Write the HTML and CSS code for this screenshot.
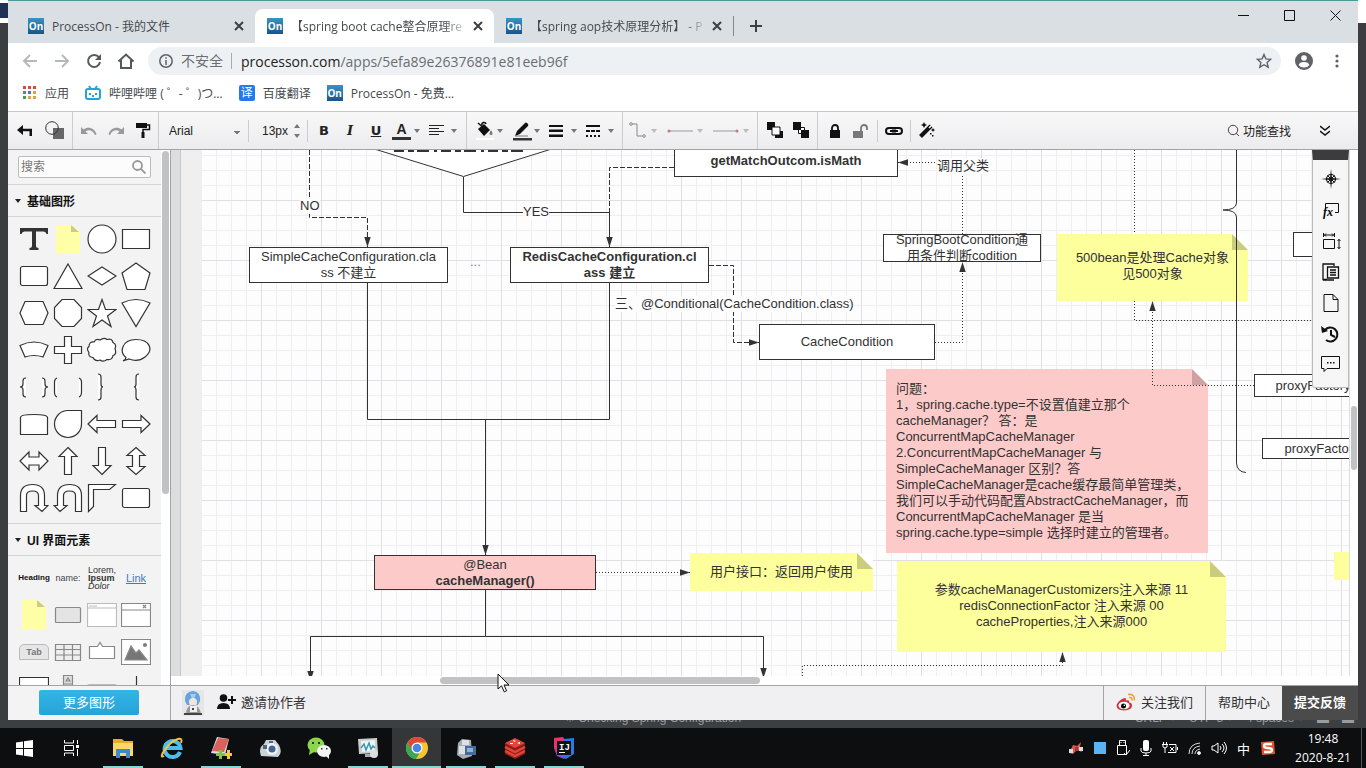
FILE: index.html
```html
<!DOCTYPE html>
<html lang="zh-CN">
<head>
  <meta charset="UTF-8">
  <meta name="viewport" content="width=device-width, initial-scale=1.0">
  <title>spring boot cache整合原理 - ProcessOn</title>
  <link rel="stylesheet" href="styles.css">
</head>
<body>
  <div class="screen">
    <div class="ide-edge ide-left"></div>

    <div class="browser">
      <!-- Tabs -->
      <div class="tab-strip">
        <div class="tab">
          <span class="favicon">On</span>
          <span class="tab-title">ProcessOn - 我的文件</span>
          <button class="tab-close" aria-label="关闭"><svg width="10" height="10"><path d="M1 1l8 8M9 1l-8 8"/></svg></button>
        </div>
        <div class="tab active">
          <span class="favicon">On</span>
          <span class="tab-title">【spring boot cache整合原理re</span>
          <button class="tab-close" aria-label="关闭"><svg width="10" height="10"><path d="M1 1l8 8M9 1l-8 8"/></svg></button>
        </div>
        <div class="tab last">
          <span class="favicon">On</span>
          <span class="tab-title">【spring aop技术原理分析】 - P</span>
          <button class="tab-close" aria-label="关闭"><svg width="10" height="10"><path d="M1 1l8 8M9 1l-8 8"/></svg></button>
        </div>
        <button class="new-tab" aria-label="新标签页"><svg width="12" height="12"><path d="M6 0v12M0 6h12"/></svg></button>
        <div class="window-buttons">
          <button aria-label="最小化"><svg width="11" height="11"><path d="M0 5.500h11"/></svg></button>
          <button aria-label="最大化"><svg width="11" height="11"><path d="M.5.5h10v10H.5z"/></svg></button>
          <button aria-label="关闭"><svg width="11" height="11"><path d="M.5.5l10 10M.5 10.500l10-10"/></svg></button>
        </div>
      </div>

      <!-- Address bar -->
      <div class="nav-bar">
        <button class="nav-btn off" aria-label="后退"><svg width="16" height="16"><path d="M15 8H2M8 2L2 8l6 6"/></svg></button>
        <button class="nav-btn off" aria-label="前进"><svg width="16" height="16"><path d="M1 8h13M8 2l6 6-6 6"/></svg></button>
        <button class="nav-btn" aria-label="刷新"><svg width="16" height="16"><path d="M13 4.500A6 6 0 1 0 14 9"/><path class="fill" d="M15 1v6H9z"/></svg></button>
        <button class="nav-btn" aria-label="主页"><svg width="18" height="16"><path d="M1.500 8.500L9 1.500l7.500 7M4 7v8h10V7"/></svg></button>
        <div class="address">
          <svg class="info" width="14" height="14"><circle cx="7" cy="7" r="6.200"/><path d="M7 6v5M7 3.200v1.600"/></svg>
          <span class="unsafe">不安全</span>
          <span class="url"><b>processon.com</b>/apps/5efa89e26376891e81eeb96f</span>
          <svg class="star" width="16" height="16" viewBox="0 0 16 16"><path d="M8 1.500l1.900 4.400 4.800.4-3.600 3.200 1.100 4.700L8 11.700l-4.200 2.500 1.100-4.700L1.300 6.300l4.800-.4z"/></svg>
        </div>
        <button class="user" aria-label="用户"><svg width="18" height="18" viewBox="0 0 18 18"><circle cx="9" cy="9" r="9" fill="#5f6368"/><circle cx="9" cy="6" r="2.800" fill="#fff"/><path d="M3.600 13c1-2.400 3.200-3 5.400-3s4.400.6 5.400 3A6.600 6.600 0 0 1 9 15.500 6.600 6.600 0 0 1 3.600 13z" fill="#fff"/></svg></button>
        <button class="menu" aria-label="菜单"><svg width="4" height="14" fill="#5f6368"><circle cx="2" cy="2" r="1.600"/><circle cx="2" cy="7" r="1.600"/><circle cx="2" cy="12" r="1.600"/></svg></button>
      </div>

      <!-- Bookmarks -->
      <nav class="bookmarks">
        <a href="#"><svg width="14" height="14"><path fill="#d44a3c" d="M0 0h3v3H0zM5 0h3v3H5zM10 0h3v3h-3z"/><path fill="#4c9a57" d="M0 5h3v3H0zM0 10h3v3H0z"/><path fill="#3f79d0" d="M5 5h3v3H5z"/><path fill="#e0a53a" d="M10 5h3v3h-3zM5 10h3v3H5zM10 10h3v3h-3z"/></svg>应用</a>
        <a href="#"><svg width="16" height="16" fill="none" stroke="#22a5d6" stroke-width="2"><rect x="1" y="4" width="14" height="10" rx="2"/><path d="M4 1l2 3M12 1l-2 3M5 8v2M11 8v2M7 11h2"/></svg>哔哩哔哩 ( ゜- ゜)つ…</a>
        <a href="#"><span class="yi">译</span>百度翻译</a>
        <a href="#"><span class="favicon">On</span>ProcessOn - 免费…</a>
      </nav>

      <!-- Editor toolbar -->
      <div class="toolbar">
        <div class="group g-file">
          <button class="tool" aria-label="返回"><svg width="16" height="14"><path class="blk" d="M0 6l6-5v3.700h9V12h-2.500V7.300H6V11z"/></svg></button>
          <button class="tool" aria-label="图形"><svg width="20" height="19"><path fill="#666" d="M8 7h11v11H8z"/><circle cx="7" cy="7" r="6.300" fill="none" stroke="#333"/></svg></button>
        </div>
        <div class="group g-undo">
          <button class="tool" aria-label="撤销"><svg width="16" height="12"><path fill="#999" d="M0 2v7h7L4.500 6.500C8 4 12 5.500 14 10l1.500-.5C14 3 7 1 2.500 4.500z"/></svg></button>
          <button class="tool" aria-label="恢复"><svg width="16" height="12"><path fill="#999" d="M16 2v7H9l2.500-2.500C8 4 4 5.500 2 10L.5 9.500C2 3 9 1 13.500 4.500z"/></svg></button>
          <button class="tool" aria-label="格式刷"><svg width="16" height="17"><path class="blk" d="M1 1h11v5H1z"/><path d="M12 3h2.500v4.500H8V11" fill="none" stroke="#111" stroke-width="1.500"/><path class="blk" d="M6.500 10h3v6h-3z"/></svg></button>
        </div>
        <div class="group g-text">
          <select class="font-name" aria-label="字体"><option>Arial</option></select>
          <span class="font-size"><input type="text" value="13px" aria-label="字号"><svg width="6" height="14" fill="#777"><path d="M0 4l3-4 3 4zM0 10l3 4 3-4z"/></svg></span>
          <button class="tool letter bold">B</button>
          <button class="tool letter italic">I</button>
          <button class="tool letter under">U</button>
          <button class="tool drop" aria-label="字体颜色"><span class="font-color">A</span><i class="arrow"></i></button>
          <button class="tool drop" aria-label="对齐"><svg width="16" height="13"><path d="M0 1.500h15M0 4.500h10M0 7.500h15M0 10.500h10" stroke="#222"/></svg><i class="arrow"></i></button>
        </div>
        <div class="group g-style">
          <button class="tool drop" aria-label="填充"><svg width="20" height="20"><path class="blk" d="M3 8l6-5 6 6-6 6z"/><path d="M3 2l7 6M7 4a2 2 0 0 1 4-1" fill="none" stroke="#111" stroke-width="1.500"/><path d="M16 9q3 5 0 5t0-5" fill="#777"/><path fill="#fff" d="M1 17h18v2H1z"/></svg><i class="arrow"></i></button>
          <button class="tool drop" aria-label="线条颜色"><svg width="20" height="20"><path class="blk" d="M3 15l2-5 8-8q1-1 2.500.5T16 5l-8 8z"/><path d="M3 15h13" stroke="#777"/><path fill="#333" d="M1 17h19v2.500H1z"/></svg><i class="arrow"></i></button>
          <button class="tool drop" aria-label="线宽"><svg width="14" height="12"><path class="blk" d="M0 0h14v2H0zM0 4.500h14v2.500H0zM0 9.500h14V12H0z"/></svg><i class="arrow"></i></button>
          <button class="tool drop" aria-label="线型"><svg width="14" height="12"><path class="blk" d="M0 0h14v2H0zM0 5h4v2H0zM5 5h4v2H5zM10 5h4v2h-4zM0 10h2v2H0zM4 10h2v2H4zM8 10h2v2H8zM12 10h2v2h-2z"/></svg><i class="arrow"></i></button>
        </div>
        <div class="group g-line">
          <button class="tool drop" aria-label="连线类型"><svg width="18" height="17" fill="none" stroke="#888"><path d="M3 2h5v12h5"/><circle cx="2" cy="2" r="1.300"/><circle cx="15" cy="14" r="1.300"/></svg><i class="arrow pale"></i></button>
          <button class="tool drop" aria-label="起点"><svg width="26" height="4"><path d="M2 2h24" stroke="#999"/><circle cx="2" cy="2" r="1.500" fill="#c77"/></svg><i class="arrow pale"></i></button>
          <button class="tool drop" aria-label="终点"><svg width="26" height="4"><path d="M0 2h24" stroke="#999"/><circle cx="24" cy="2" r="1.500" fill="#c77"/></svg><i class="arrow pale"></i></button>
        </div>
        <div class="group g-pair">
          <button class="tool" aria-label="置于顶层"><svg width="17" height="17"><path class="blk" d="M0 0h8v8H0zM8 9h8v7H8z"/><path fill="#fff" stroke="#111" d="M5 5h8v8H5z"/></svg></button>
          <button class="tool" aria-label="置于底层"><svg width="17" height="17"><path fill="#fff" stroke="#111" d="M5.500 5.500h6v6h-6z"/><path class="blk" d="M0 0h8v8H0zM8 8h8v8H8z"/></svg></button>
        </div>
        <div class="group g-pair short">
          <button class="tool" aria-label="锁定"><svg width="12" height="15"><path class="blk" d="M1 6h10v8H1z"/><path d="M3 7V4a3 3 0 0 1 6 0v3" fill="none" stroke="#111" stroke-width="1.800"/></svg></button>
          <button class="tool" aria-label="解锁"><svg width="16" height="15"><path fill="#777" d="M0 7h10v7H0z"/><path d="M8 8V4a3 3 0 0 1 6 0v2" fill="none" stroke="#777" stroke-width="1.800"/></svg></button>
        </div>
        <div class="group g-one short">
          <button class="tool" aria-label="链接"><svg width="18" height="8" fill="none" stroke="#111" stroke-width="2"><path d="M8 2.500V1H4a3 3 0 0 0 0 6h4V5.500M10 2.500V1h4a3 3 0 0 1 0 6h-4V5.500M5 4h8"/></svg></button>
        </div>
        <div class="group g-one none">
          <button class="tool" aria-label="美化"><svg width="17" height="17"><path d="M1.500 14.500L12 4" stroke="#111" stroke-width="4"/><path d="M10 6l2-2" stroke="#fff" stroke-width="1.500"/><path class="blk" d="M5 0l1 2 2 1-2 1-1 2-1-2-2-1 2-1zM14 6l.7 1.300 1.300.7-1.300.7L14 10l-.7-1.300L12 8l1.300-.7zM11 11h1.500v1.500H11zM13 13h1.500v1.500H13z"/></svg></button>
        </div>
        <button class="find"><svg width="13" height="13" fill="none" stroke="#444"><circle cx="6" cy="6" r="4.700"/><path d="M9 9l3 3"/></svg>功能查找</button>
        <button class="fold" aria-label="收起"><svg width="10" height="11" fill="none" stroke="#111" stroke-width="1.500"><path d="M0 1l5 4 5-4M0 6l5 4 5-4"/></svg></button>
      </div>

      <div class="editor">
        <!-- Shape library -->
        <aside class="panel">
          <div class="panel-scroll">
            <div class="panel-list">
              <label class="search"><input type="text" placeholder="搜索" aria-label="搜索"><svg width="14" height="14" fill="none" stroke="#999" stroke-width="1.800"><circle cx="5.500" cy="5.500" r="4.500"/><path d="M9 9l4.500 4.500"/></svg></label>
              <h3>基础图形</h3>
              <div class="shapes">
                <svg viewBox="0 0 30 30"><path fill="#333" stroke="none" d="M1 4h28v6h-1.500q-.5-2.500-3-2.500H17V22q0 2 2.500 2v2h-9v-2q2.500 0 2.500-2V7.500H5.500q-2.500 0-3 2.500H1z"/></svg>
                <svg viewBox="0 0 30 30"><path fill="#ffffa8" stroke="none" d="M3 1h16l8 7v22H3z"/><path fill="#cccc86" stroke="none" d="M18 1l8 7h-8z"/></svg>
                <svg viewBox="0 0 30 30"><circle cx="15" cy="15" r="14"/></svg>
                <svg viewBox="0 0 30 30"><path d="M1.500 5.500h27v19h-27z"/></svg>
                <svg viewBox="0 0 30 30"><rect x="1.500" y="5.500" width="27" height="19" rx="2"/></svg>
                <svg viewBox="0 0 30 30"><path d="M15 3l14 24.500H1z"/></svg>
                <svg viewBox="0 0 30 30"><path d="M15 6l14 9-14 9-14-9z"/></svg>
                <svg viewBox="0 0 30 30"><path d="M15 2l14 10-5 16.500H6L1 12z"/></svg>
                <svg viewBox="0 0 30 30"><path d="M6 3.500h18l5 11.500-5 11.500H6L1 15z"/></svg>
                <svg viewBox="0 0 30 30"><path d="M9 1.500h12l7.500 8v11l-7.500 8H9l-7.500-8v-11z"/></svg>
                <svg viewBox="0 0 30 30"><path d="M15 1.500l3.500 10H29l-8.500 6.500 3.500 10.500-9-6.500-9 6.500L9.500 18 1 11.500h10.500z"/></svg>
                <svg viewBox="0 0 30 30"><path d="M1 5q14-7 28 0L15 28.500z"/></svg>
                <svg viewBox="0 0 30 30"><path d="M1 10.500q14-7 28 0L24 22q-9-3-18 0z"/></svg>
                <svg viewBox="0 0 30 30"><path d="M11.500 1.500h7v10h10v7h-10v10h-7v-10h-10v-7h10z"/></svg>
                <svg viewBox="0 0 30 30"><path d="M7 7q2-4 6-2 4-3 7-.5 5-1.500 6 3 4 2 2 6 2 6-2 7-1 5-6 4-4 3-7 .5-5 2-7-2.500-5-.5-4-5-3-4 0-6 0-5 5-4.500z"/></svg>
                <svg viewBox="0 0 30 30"><path d="M5 22.500C-2 17 1 4.500 15 4.500S33 15 24 22c-5 4-11 4-16 2l-6 2c2-1 3-2 3-3.500z"/></svg>
                <svg viewBox="0 0 30 30"><path d="M7 6q-3 0-3 3v3q0 3-3 3 3 0 3 3v4q0 3 3 3M23 6q3 0 3 3v3q0 3 3 3-3 0-3 3v4q0 3-3 3"/></svg>
                <svg viewBox="0 0 30 30"><path d="M4 6q-2.500 1-2.500 4v10q0 4 2.500 5M26 6q2.500 1 2.500 4v10q0 4-2.500 5"/></svg>
                <svg viewBox="0 0 30 30"><path d="M11 2q3 0 3 3v7q0 3 2 3-2 0-2 3v7q0 3-3 3"/></svg>
                <svg viewBox="0 0 30 30"><path d="M18 2q-3 0-3 3v7q0 3-2 3 2 0 2 3v7q0 3 3 3"/></svg>
                <svg viewBox="0 0 30 30"><path d="M1.500 25.500v-17q0-3 13.500-3t13.500 3v17z"/></svg>
                <svg viewBox="0 0 30 30"><path d="M28.500 1.500v13.500A13.500 13.500 0 1 1 15 1.500z"/></svg>
                <svg viewBox="0 0 30 30"><path d="M1 15l9-8.500v5h18.500v7H10v5z"/></svg>
                <svg viewBox="0 0 30 30"><path d="M29 15l-9-8.500v5H1.500v7H20v5z"/></svg>
                <svg viewBox="0 0 30 30"><path d="M1 15l9-9v5h10V6l9 9-9 9v-5H10v5z"/></svg>
                <svg viewBox="0 0 30 30"><path d="M15 1.500l9 9h-5.500v18h-7v-18H6z"/></svg>
                <svg viewBox="0 0 30 30"><path d="M15 28.500l9-9h-5.500v-18h-7v18H6z"/></svg>
                <svg viewBox="0 0 30 30"><path d="M15 1.500l9 8h-5.500v11H24l-9 8-9-8h5.500v-11H6z"/></svg>
                <svg viewBox="0 0 30 30"><path d="M1.500 28.500v-16q0-11 12-11t12 11v10H29l-6 6-7-6h3.500v-10q0-4.500-6-4.500t-6 4.500v16z"/></svg>
                <svg viewBox="0 0 30 30"><path d="M28.500 28.500v-16q0-11-12-11t-12 11v10H1l6 6 7-6h-3.500v-10q0-4.500 6-4.500t6 4.500v16z"/></svg>
                <svg viewBox="0 0 30 30"><path d="M1.500 28.500v-27h27l-6 5h-16v17z"/></svg>
                <svg viewBox="0 0 30 30"><rect x="1.500" y="5.500" width="27" height="19" rx="2"/></svg>
              </div>
              <h3>UI 界面元素</h3>
              <div class="shapes ui">
                <span class="u-heading">Heading</span>
                <span class="u-name">name:</span>
                <span class="u-lorem">Lorem,<b>Ipsum</b><i>Dolor</i></span>
                <span class="u-link">Link</span>
                <svg viewBox="0 0 30 30"><path fill="#ffffa8" stroke="none" d="M3 0h16l8 7v22H3z"/><path fill="#cccc86" stroke="none" d="M18 0l8 7h-8z"/></svg>
                <svg viewBox="0 0 30 30" class="gray"><rect x="2.500" y="7.500" width="25" height="15" rx="1" fill="#e4e4e4"/></svg>
                <svg viewBox="0 0 30 30" class="light"><path d="M.5 3.500h29v23H.5zM.5 8h29M2 6h8"/></svg>
                <svg viewBox="0 0 30 30" class="gray"><path d="M.5 3.500h29v23H.5zM.5 10h29M22 5l3 3M25 5l-3 3"/></svg>
                <span class="u-tab">Tab</span>
                <svg viewBox="0 0 30 30" class="gray"><path d="M2.500 7.500h25v16h-25zM2.500 12.500h25M2.500 18h25M11 7.500v16M19.500 7.500v16" fill="#eee"/></svg>
                <svg viewBox="0 0 30 30" class="gray"><path d="M2.500 9.500h8l2.500-4 2.500 4h12v12h-25z"/></svg>
                <svg viewBox="0 0 30 30" class="gray"><path d="M.5 2.500h29v25H.5z"/><path d="M4 23L10 9l5 7 3-3 8 10z" fill="#777"/><circle cx="24" cy="8" r="1.500" fill="#777"/></svg>
                <svg viewBox="0 0 30 30"><path d="M.5 3.500h29v23H.5z"/></svg>
                <svg viewBox="0 0 30 30" class="gray"><path d="M10.500 1.500h9v27h-9zM10.500 10h9M13 7l2-3 2 3z" fill="#ddd"/></svg>
                <svg viewBox="0 0 30 30" class="light"><rect x=".5" y="10.500" width="29" height="9" rx="2"/></svg>
                <svg viewBox="0 0 30 30"><path d="M15.500 2v26"/></svg>
              </div>
            </div>
            <div class="panel-bar"><div class="thumb"></div></div>
          </div>
          <div class="more"><button>更多图形</button></div>
        </aside>

        <main class="work">
          <div class="canvas">
            <div class="gutter"></div>
            <div class="sheet">
              <div class="note n-bean">500bean是处理Cache对象<br>见500对象</div>
              <div class="note pink n-question">问题：<br>1，spring.cache.type=不设置值建立那个<br>cacheManager？ 答：是<br>ConcurrentMapCacheManager<br>2.ConcurrentMapCacheManager 与<br>SimpleCacheManager 区别？答<br>SimpleCacheManager是cache缓存最简单管理类，<br>我们可以手动代码配置AbstractCacheManager，而<br>ConcurrentMapCacheManager 是当<br>spring.cache.type=simple 选择时建立的管理者。</div>
              <div class="note n-user">用户接口：返回用户使用</div>
              <div class="note n-params">参数cacheManagerCustomizers注入来源 11<br>redisConnectionFactor 注入来源 00<br>cacheProperties,注入来源000</div>
              <div class="note flat n-edge"></div>

              <!-- Connectors, drawn in screen units -->
              <svg class="wires" width="1147" height="526" viewBox="202 150 1147 526">
                <defs>
                  <marker id="tip" markerUnits="userSpaceOnUse" markerWidth="10" markerHeight="8" refX="10" refY="4" orient="auto"><path d="M0 .8L10 4 0 7.200z" fill="#323232"/></marker>
                </defs>
                <path class="solid white" d="M376 149.500L463.500 176.500 550 149.500"/>
                <path class="clip-text" d="M394 151H526"/>
                <path class="dash" marker-end="url(#tip)" d="M309.500 150V217.500H367.500V247"/>
                <path class="solid" marker-end="url(#tip)" d="M463.500 177V212.500H609.500V247"/>
                <path class="dash" d="M674 167.500H609.500V240"/>
                <path class="dash" marker-end="url(#tip)" d="M709 265.500H733.500V342.500H759"/>
                <path class="dot" marker-end="url(#tip)" d="M935 342.500H962.500V262"/>
                <path class="dot" marker-end="url(#tip)" d="M962.500 234V162.500H898"/>
                <path class="dot" d="M1134.500 150V234M1134.500 301V320.500H1349"/>
                <path class="dot" marker-end="url(#tip)" d="M1254 385.500H1152.500V301"/>
                <path class="solid" d="M367.500 283V419.500H609.500V283"/>
                <path class="solid" marker-end="url(#tip)" d="M485.500 419V555"/>
                <path class="solid" marker-end="url(#tip)" d="M485.500 590V636.500H310.500V681"/>
                <path class="solid" marker-end="url(#tip)" d="M485.500 636.500H763.500V678"/>
                <path class="dot" marker-end="url(#tip)" d="M596 572.500H690"/>
                <path class="dot" marker-end="url(#tip)" d="M802.500 676V665.500H1062.500V652"/>
                <path class="solid" d="M1236.500 150V203Q1236 210 1223 210 1236 210 1236.500 217V463Q1237 472 1246 472.500"/>
              </svg>

              <div class="box n-simple">SimpleCacheConfiguration.cla<br>ss 不建立</div>
              <div class="box strong n-redis">RedisCacheConfiguration.cl<br>ass 建立</div>
              <div class="box strong n-match">getMatchOutcom.isMath</div>
              <div class="box n-boot">SpringBootCondition通<br>用条件判断codition</div>
              <div class="box n-cond">CacheCondition</div>
              <div class="box red n-manager">@Bean<br><b>cacheManager()</b></div>
              <div class="box n-proxy">proxyFactory</div>
              <div class="box n-proxy2">proxyFactory</div>
              <div class="box n-blank"></div>
              <span class="tag t-no">NO</span>
              <span class="tag t-yes">YES</span>
              <span class="tag t-parent">调用父类</span>
              <span class="tag t-cond">三、@Conditional(CacheCondition.class)</span>
              <span class="tag bare t-dots">...</span>
            </div>
            <div class="v-bar"><div class="thumb"></div></div>

            <!-- Floating dock -->
            <div class="dock">
              <button aria-label="导航"><svg width="20" height="20"><circle cx="10" cy="10" r="4.500" fill="none" stroke="#111" stroke-width="1.200"/><path class="blk" d="M10 0l1 9 9 1-9 1-1 9-1-9-9-1 9-1z"/><path d="M6.500 6.500l7 7M13.500 6.500l-7 7" stroke="#111"/></svg></button>
              <button aria-label="公式"><svg width="18" height="18"><path d="M3.500 8V2.500h13v9H13" fill="none" stroke="#111"/><text x="1" y="15" class="fx">fx</text></svg></button>
              <button aria-label="尺寸"><svg width="20" height="18" fill="none" stroke="#111"><path d="M2.500 7.500h11v9h-11zM2.500 1v4M13.500 1v4M3 3h10M5 1.500L3.500 3 5 4.500M11 1.500L12.500 3 11 4.500M18 7v10M16.500 9L18 7.500 19.500 9M16.500 15l1.500 1.500 1.500-1.500"/></svg></button>
              <button aria-label="图层"><svg width="18" height="18" fill="none" stroke="#111" stroke-width="1.300"><path d="M5 16.500H1V1h11v2M12 17H1"/><path d="M5.500 4h11v11h-11zM8 7h6M8 9.500h6M8 12h6"/></svg></button>
              <button aria-label="页面"><svg width="16" height="18" fill="none" stroke="#111"><path d="M1 .5h9l5 5v12H1zM10 .5v5h5"/></svg></button>
              <button aria-label="历史"><svg width="20" height="18" fill="none" stroke="#111" stroke-width="2"><path d="M4 5a7 7 0 1 1 1 10"/><path d="M10 5v5l4 2"/><path class="blk" stroke="none" d="M0 1l1 7 6-2z"/></svg></button>
              <button aria-label="评论"><svg width="20" height="17"><path d="M.5.5h18v12H6l-3 3v-3H.5z" fill="none" stroke="#111"/><path class="blk" d="M6 6h1.500v1.500H6zM9 6h1.500v1.500H9zM12 6h1.500v1.500H12z"/></svg></button>
            </div>
          </div>
          <div class="h-bar"><div class="thumb"></div>
            <svg class="cursor" width="13" height="20"><path d="M1 1v15l3.500-3.200 2.700 6 2.400-1-2.600-5.800h5z" fill="#fff" stroke="#111"/></svg>
          </div>
          <footer class="status">
            <svg class="avatar" width="22" height="26"><path fill="#e6e6e6" d="M0 0h22v26H0z"/><path fill="#68a3dc" d="M3 11q-1-9 8-10 8 1 7 10l-2 4H5z"/><path fill="#a8ccea" d="M8 4l3 7 3-7z"/><circle cx="11" cy="12" r="4" fill="#f1e5df"/><path fill="#999" d="M4 25q0-10 7-10t8 10z"/><path fill="#eee" d="M8 16h7v6H8z"/><path fill="#444" d="M2 23h18v2H2zM10 18h2v2h-2z"/></svg>
            <button class="invite"><svg width="19" height="16" class="blk"><circle cx="6.500" cy="4" r="3.800"/><path d="M0 15q0-6 6.500-6T13 15zM14 2h2v3h3v2h-3v3h-2V7h-3V5h3z"/></svg>邀请协作者</button>
            <button class="link weibo"><svg width="20" height="18"><path fill="#d0323c" d="M9 5q-5 1-8 6-2 6 7 6.500 8-.5 8-5 0-3-3-3 1-3-3-2 0-3-1-2.500z"/><ellipse cx="8" cy="12.500" rx="5.500" ry="3.800" fill="#fff"/><circle cx="7.500" cy="13" r="2.500"/><circle cx="8.300" cy="12.300" r=".8" fill="#fff"/><path d="M12 1.500q7-1 6.500 6M13 4.500q3.500-.5 3 3" fill="none" stroke="#f0a030" stroke-width="1.600"/></svg>关注我们</button>
            <button class="link">帮助中心</button>
            <button class="link feedback">提交反馈</button>
          </footer>
        </main>
      </div>
    </div>

    <div class="ide-edge ide-right"></div>
  </div>

  <div class="ide-status">
    <span class="ide-task">✳ Checking Spring Configuration</span>
    <span>CRLF ÷</span><span>UTF-8 ÷</span><span>4 spaces ÷</span><span>▟</span><span>▟</span>
  </div>

  <!-- Windows taskbar -->
  <div class="taskbar">
    <button class="start" aria-label="开始"><svg width="17" height="17" fill="#fff"><path d="M0 2.500l7-1V8H0zM8 1.300L17 0v8H8zM0 9h7v6.500l-7-1zM8 9h9v8l-9-1.300z"/></svg></button>
    <button class="start" aria-label="任务视图"><svg width="16" height="16" fill="none" stroke="#fff"><path d="M.5 0v3h9V0M.5 5.500h9v5h-9zM.5 16v-3h9v3M13.500 0v4M13.500 9v7"/><path d="M12 5h3v3h-3z" fill="#fff" stroke="none"/></svg></button>
    <button class="app run" aria-label="资源管理器"><svg width="24" height="24"><path fill="#e6ac2c" d="M2 3h9l2 2h9v4H2z"/><path fill="#fbd66b" d="M2 7h20v13H2z"/><path fill="#3b8ac9" d="M5 22v-9h14v9h-4v-5H9v5z"/></svg></button>
    <button class="app" aria-label="Internet Explorer"><svg width="24" height="24" fill="none"><path d="M20 16a8 8 0 1 1 .5-4H6" stroke="#4dbdf0" stroke-width="4"/><path d="M4 20C-3 24 8 6 18 3q5-1 3 4" stroke="#f3c63b" stroke-width="2"/></svg></button>
    <button class="app run" aria-label="Notepad++"><svg width="24" height="24"><path fill="#ddd" d="M8 1l12 2-4 16-14-2z"/><path fill="#d9625c" d="M9 2l11 1-5 13-12-1z"/><path fill="#82c341" d="M7 17h3v-3h3v3h3v3h-3v3h-3v-3H7z"/><path fill="#f2cb3d" d="M16 17h2v-3h3v3h2v3h-2v3h-3v-3h-2z"/></svg></button>
    <button class="app" aria-label="工具"><svg width="24" height="24"><path fill="#c9d2db" d="M3 20q-3-8 3-12l2-4h9l4 5q4 8-1 12z"/><circle cx="14" cy="13" r="6" fill="#eef3f7"/><circle cx="14" cy="13" r="3.500" fill="#43678e"/><path fill="#567" d="M5 9h4v4H5zM11 5h4v2h-4z"/></svg></button>
    <button class="app" aria-label="微信"><svg width="24" height="24"><ellipse cx="9" cy="9" rx="8.500" ry="7.500" fill="#8bd64b"/><path fill="#8bd64b" d="M3 13l-1 6 5-3z"/><ellipse cx="17" cy="15" rx="7" ry="6" fill="#f4f4f4"/><path fill="#f4f4f4" d="M18 19l4 4v-5z"/><path fill="#333" d="M5 6h2v2H5zM11 6h2v2h-2zM14 12h1.500v1.500H14zM19 12h1.500v1.500H19z"/></svg></button>
    <button class="app run" aria-label="监视器"><svg width="24" height="24"><path fill="#ccc" d="M2 3l19-1 1 15-19 1z"/><path fill="#eaf5f8" d="M5 5l14-1v11l-13 1z"/><path d="M5 12l3-4 2 6 3-7 2 6 2-3 2 2" fill="none" stroke="#3e93b0" stroke-width="1.500"/><path fill="#aaa" d="M9 18h7v3H9z"/><circle cx="18" cy="18" r="4" fill="#ddd"/></svg></button>
    <button class="app run current" aria-label="Chrome"><svg width="24" height="24"><circle cx="12" cy="12" r="11" fill="#f5c52d"/><path fill="#dc483b" d="M2.500 6.500a11 11 0 0 1 19 0H12L7 15z"/><path fill="#3aa757" d="M2.500 6.500a11 11 0 0 0 8.500 16.500l5-8.500-4 2.500-5-2.500z"/><circle cx="12" cy="12" r="5.500" fill="#fff"/><circle cx="12" cy="12" r="4.300" fill="#4787e8"/></svg></button>
    <button class="app run" aria-label="录像"><svg width="24" height="24"><path fill="#a8adb5" d="M4 7l4-4 9 1 1 16-9 3-6-4z"/><path fill="#dce1e6" d="M8 4h7v5H8zM5 10h6v8H5z"/><path fill="#466a9e" d="M11 10h11v9H11z"/><path fill="#8fb2dc" d="M13 12h6v4h-6z"/></svg></button>
    <button class="app run" aria-label="Redis"><svg width="24" height="24"><path fill="#8f1c17" d="M2 7v11l10 5 10-5V7z"/><path fill="#e0443b" d="M12 2l10 5-10 5L2 7z"/><path d="M2 11l10 5 10-5M2 15l10 5 10-5" stroke="#e0443b" stroke-width="2.500" fill="none"/><path fill="#fff" d="M10 4l3 1-2 1zM14 7l3-1v2zM7 7h3v1H7z"/></svg></button>
    <button class="app run" aria-label="IntelliJ IDEA"><svg width="24" height="24"><path fill="#e3356f" d="M2 2l9-1 4 6L5 20 2 12z"/><path fill="#287be6" d="M12 3l10-1v16l-8 5-8-3z"/><path fill="#7a4ee0" d="M4 15h8v8l-7-3z"/><path fill="#111" d="M5 5h14v14H5z"/><text x="7" y="14" class="ij">IJ</text><path fill="#fff" d="M7 16h6v1H7z"/></svg></button>

    <div class="tray">
      <svg width="16" height="16"><path fill="#d8574a" d="M1 13l4-8 4 1 4-4-1 5 2 5-5-2-4 4z"/><path fill="#ddd" d="M1 9h4v4H1zM11 7h4v4h-4z"/><path fill="#a33" d="M7 7h3v4H7z"/></svg>
      <svg width="12" height="12"><path fill="#5cb3f1" d="M0 0h12v12H0z"/></svg>
      <svg width="14" height="16" fill="none" stroke="#fff"><path d="M3.500 5V.5h6V5M1.500 5.500h9v9h-9zM5 2v1M8 2v1M8 13l2 2 4-5"/></svg>
      <svg width="12" height="16"><rect x="3" y="0" width="6" height="11" rx="2" fill="#fff"/><path d="M1 8v3q0 2 5 2t5-2V8M6 13v2M3 15.500h6" fill="none" stroke="#fff"/></svg>
      <svg width="16" height="12" fill="none" stroke="#fff"><path d="M1.500 0v2M4.500 0v2M0 2.500h6M1 3v2q2 2 4 0V3M3 6v5M7 2.500h7v8H6M15.500 5v3M8 5l4 4M12 5L8 9"/></svg>
      <svg width="13" height="13" fill="none" stroke="#ddd"><path d="M1 12Q1 2 12 1M4 12q0-7 8-8M7 12q0-4 5-5"/><circle cx="11" cy="11" r="1.500" fill="#fff"/></svg>
      <svg width="16" height="14" fill="none" stroke="#fff"><path d="M1 5h2l4-3v10L3 9H1zM9 5q2 2 0 4M11 3q4 4 0 8M13 1q5 6 0 12"/></svg>
      <span class="ime">中</span>
      <svg width="16" height="16"><path fill="#e8502c" d="M1 2l13-1 1 13-13 1z"/><path d="M12 4H6.500Q4 4 4 6t4 2 4 2-2.500 2H4" fill="none" stroke="#fff" stroke-width="2.300"/></svg>
      <time class="clock">19:48<br>2020-8-21</time>
    </div>
  </div>
</body>
</html>
```
FILE: styles.css
```css
* {
  box-sizing: border-box;
}

body {
  margin: 0;
  height: 100vh;
  display: flex;
  flex-direction: column;
  overflow: hidden;
  background: #3c3f41;
  color: #323232;
  font-family: "Liberation Sans", "Noto Sans CJK SC", sans-serif;
  font-size: 13px;
}

button, input, select {
  font: inherit;
  color: inherit;
  margin: 0;
  padding: 0;
  border: 0;
  background: none;
}

svg {
  flex: none;
  display: block;
}

.blk {
  fill: #111;
}

.screen {
  flex: 1;
  min-height: 0;
  display: grid;
  grid-template-columns: 8px 1fr 8px;
}

.ide-edge {
  background: linear-gradient(#fff 0 23px, #3d3c40 23px);
}

.ide-left {
  background: linear-gradient(#fff 0 3px, #1f3154 3px 18px, #fff 18px 23px, #3a3e3e 23px);
}

.browser {
  display: flex;
  flex-direction: column;
  min-width: 0;
  min-height: 0;
  border-top: 1px solid #4a9a9c;
  background: #fff;
  font-family: "Open Sans", "Noto Sans CJK SC", sans-serif;
}

/* Tabs */
.tab-strip {
  flex: none;
  height: 42px;
  display: flex;
  align-items: flex-end;
  background: #dadfe4;
}

.tab {
  display: flex;
  align-items: center;
  width: 239px;
  height: 34px;
  padding: 0 8px 0 12px;
  font-size: 12px;
  color: #45494d;
}

.tab:first-child {
  width: 247px;
  padding-left: 20px;
}

.tab.active {
  background: #fff;
  border-radius: 8px 8px 0 0;
}

.favicon {
  flex: none;
  width: 16px;
  height: 16px;
  background: linear-gradient(#3794c4, #17558c);
  color: #fff;
  font: bold 10px/16px "Open Sans", sans-serif;
  text-align: center;
}

.tab-title {
  flex: 1;
  margin-left: 8px;
  overflow: hidden;
  white-space: nowrap;
  -webkit-mask-image: linear-gradient(90deg, #000 85%, transparent);
  mask-image: linear-gradient(90deg, #000 85%, transparent);
}

.tab:first-child .tab-title {
  -webkit-mask-image: none;
  mask-image: none;
}

.tab-close, .new-tab {
  display: flex;
  align-items: center;
  justify-content: center;
  width: 16px;
  height: 16px;
  fill: none;
  stroke: #3c4043;
  stroke-width: 2;
}

.new-tab {
  width: 44px;
  height: 20px;
  margin-bottom: 7px;
  border-left: 1px solid #85898c;
}

.window-buttons {
  display: flex;
  align-self: flex-start;
  margin-left: auto;
}

.window-buttons button {
  width: 46px;
  height: 28px;
  display: grid;
  place-items: center;
  fill: none;
  stroke: #111;
}

/* Address bar */
.nav-bar {
  flex: none;
  height: 36px;
  display: flex;
  align-items: center;
  padding-left: 6px;
}

.nav-btn {
  width: 32px;
  display: flex;
  justify-content: center;
  fill: none;
  stroke: #55595d;
  stroke-width: 2;
}

.nav-btn .fill {
  fill: #55595d;
  stroke: none;
}

.nav-btn.off {
  stroke: #b6b9bb;
}

.address {
  flex: 1;
  height: 28px;
  display: flex;
  align-items: center;
  margin-left: 6px;
  padding: 0 9px 0 11px;
  border-radius: 14px;
  background: #eef1f4;
  color: #6a6e72;
  font-size: 14px;
}

.info {
  fill: none;
  stroke: #5f6368;
  stroke-width: 1.5;
}

.unsafe {
  margin: 0 9px 0 8px;
  padding-right: 8px;
  border-right: 1px solid #aaa;
  line-height: 16px;
}

.url b {
  font-weight: normal;
  color: #222;
}

.star {
  margin-left: auto;
  fill: none;
  stroke: #5f6368;
  stroke-width: 1.4;
}

.user {
  margin-left: 14px;
}

.menu {
  margin: 0 19px 0 22px;
}

/* Bookmarks */
.bookmarks {
  flex: none;
  height: 33px;
  display: flex;
  align-items: center;
  gap: 16px;
  padding: 0 0 4px 15px;
  border-bottom: 1px solid #c4c6c8;
}

.bookmarks a {
  display: flex;
  align-items: center;
  gap: 8px;
  color: #45494d;
  font-size: 12px;
  text-decoration: none;
  white-space: nowrap;
}

.yi {
  width: 16px;
  height: 16px;
  border-radius: 2px;
  background: #2479ee;
  color: #fff;
  line-height: 16px;
  text-align: center;
}

/* Editor toolbar */
.toolbar {
  flex: none;
  height: 38px;
  display: flex;
  background: linear-gradient(#f8f8f9, #ececee);
  border-bottom: 1px solid #a2a4a8;
  font-family: "Liberation Sans", "Noto Sans CJK SC", sans-serif;
  font-size: 12px;
  color: #222;
}

.group {
  display: flex;
  align-items: center;
  border-right: 1px solid #ccc;
}

.group.short {
  height: 22px;
  margin-top: 8px;
}

.group.none {
  border: 0;
}

.tool {
  width: 26px;
  height: 24px;
  display: flex;
  align-items: center;
  justify-content: center;
}

.tool.drop {
  width: 37px;
  justify-content: space-between;
  padding: 0 6px 0 3px;
}

.arrow {
  flex: none;
  border: 3px solid transparent;
  border-top: 4px solid #777;
  border-bottom: 0;
}

.arrow.pale {
  border-top-color: #bbb;
}

.g-file {
  padding: 0 2px;
}

.g-file .tool {
  width: 30px;
}

.g-undo {
  padding: 0 2px;
}

.g-undo .tool {
  width: 27px;
}

.font-name {
  appearance: none;
  width: 90px;
  height: 22px;
  padding-left: 10px;
  border-right: 1px solid #ccc;
  background: linear-gradient(#777, #777) 75px 11px / 6px 1px no-repeat, linear-gradient(#777, #777) 76px 12px / 4px 1px no-repeat, linear-gradient(#777, #777) 77px 13px / 2px 1px no-repeat;
}

.font-size {
  width: 59px;
  height: 22px;
  display: flex;
  align-items: center;
  border-right: 1px solid #ccc;
}

.font-size input {
  width: 45px;
  padding-left: 13px;
}

.g-text {
  width: 308px;
}

.font-size + .letter {
  margin-left: 3px;
}

.letter {
  font-family: "DejaVu Sans", sans-serif;
  font-size: 13px;
  font-weight: bold;
}

.italic {
  font-family: "DejaVu Serif", serif;
  font-style: italic;
}

.under {
  text-decoration: underline;
}

.font-color {
  width: 19px;
  border-bottom: 3px solid #333;
  font-size: 14px;
  font-weight: bold;
  line-height: 15px;
  text-align: center;
}

.g-style {
  padding: 0 2px 0 5px;
}

.g-line {
  width: 135px;
  justify-content: space-between;
  padding: 0 5px 0 4px;
}

.g-line .drop {
  width: auto;
  gap: 4px;
  padding: 0 3px 0 2px;
}

.g-pair {
  padding: 0 3px 0 4px;
}

.g-one {
  padding: 0 3px;
}

.find {
  display: flex;
  align-items: center;
  gap: 3px;
  margin-left: auto;
}

.fold {
  margin: 0 28px 0 29px;
}

.editor {
  flex: 1;
  min-height: 0;
  display: flex;
}

/* Shape library */
.panel {
  width: 163px;
  display: flex;
  flex-direction: column;
  border-right: 1px solid #a2a4a8;
  background: #f3f3f4;
  font-family: "Liberation Sans", "Noto Sans CJK SC", sans-serif;
}

.panel-scroll {
  flex: 1;
  min-height: 0;
  display: flex;
}

.panel-list {
  flex: 1;
  overflow: hidden;
}

.panel-bar {
  width: 9px;
  padding-top: 1px;
  background: #fff;
}

.thumb {
  border-radius: 4px;
  background: #c2c2c4;
}

.panel-bar .thumb {
  width: 7px;
  height: 343px;
  margin-left: 1px;
}

.search {
  display: flex;
  align-items: center;
  height: 22px;
  margin: 6px 10px;
  padding: 0 4px 0 2px;
  border: 1px solid #bbb;
  border-radius: 2px;
  background: #fcfcfc;
}

.search input {
  flex: 1;
  min-width: 0;
  font-size: 12px;
}

.search input::placeholder {
  color: #777;
}

.panel h3 {
  height: 33px;
  margin: 0;
  padding-left: 7px;
  display: flex;
  align-items: center;
  gap: 6px;
  border-top: 1px solid #d4d4d4;
  border-bottom: 1px solid #d4d4d4;
  color: #111;
  font-size: 12px;
}

.panel h3::before {
  content: "";
  border: 3px solid transparent;
  border-top: 4px solid #222;
  border-bottom: 0;
}

.shapes {
  display: grid;
  grid-template-columns: repeat(4, 34px);
  grid-auto-rows: 37px;
  place-items: center;
  padding: 3px 9px 7px;
}

.shapes svg {
  width: 30px;
  height: 30px;
  fill: #fff;
  stroke: #333;
  stroke-width: 1.2;
}

.shapes .gray {
  stroke: #888;
}

.shapes .light {
  stroke: #bbb;
}

.u-heading, .u-name {
  color: #111;
  font-size: 8px;
  font-weight: bold;
}

.u-name {
  color: #444;
  font-size: 9px;
  font-weight: normal;
}

.u-lorem {
  display: flex;
  flex-direction: column;
  font-size: 9px;
  line-height: 8px;
}

.u-link {
  color: #3b7dbb;
  font-size: 11px;
  text-decoration: underline;
}

.u-tab {
  width: 30px;
  height: 16px;
  border: 1px solid #bbb;
  border-radius: 5px 5px 0 0;
  background: #e6e6e6;
  color: #777;
  font-size: 9px;
  font-weight: bold;
  line-height: 15px;
  text-align: center;
}

.more {
  height: 35px;
  border-top: 1px solid #a2a4a8;
  text-align: center;
}

.more button {
  width: 100px;
  height: 25px;
  margin-top: 4px;
  padding-bottom: 3px;
  border-radius: 2px;
  background: linear-gradient(#33b5e5, #26a4d8);
  color: #fff;
}

/* Drawing area */
.work {
  flex: 1;
  min-width: 0;
  display: flex;
  flex-direction: column;
  font-family: "Liberation Sans", "Noto Sans CJK SC", sans-serif;
}

.canvas {
  position: relative;
  flex: 1;
  min-height: 0;
  display: flex;
}

.gutter {
  width: 31px;
  border-left: 9px solid #dcdddf;
  background: #efeff0;
  box-shadow: inset 1px 0 #c8c8ca;
}

.sheet {
  position: relative;
  flex: 1;
  overflow: hidden;
  background-color: #fdfdfe;
  background-image:
    linear-gradient(90deg, #dfdfe4 1px, transparent 1px),
    linear-gradient(#dfdfe4 1px, transparent 1px),
    linear-gradient(90deg, #efeff2 1px, transparent 1px),
    linear-gradient(#efeff2 1px, transparent 1px);
  background-size: 60px 60px, 60px 60px, 15px 15px, 15px 15px;
  background-position: -1px 50px, -1px 50px, -1px 5px, -1px 5px;
}

.wires {
  position: absolute;
  left: 0;
  top: 0;
}

.solid, .dash, .dot {
  fill: none;
  stroke: #323232;
}

.white {
  fill: #fff;
}

.dash {
  stroke-dasharray: 5 2;
}

.dot {
  stroke-dasharray: 1 2;
}

.clip-text {
  stroke: #333;
  stroke-width: 2;
  stroke-dasharray: 10 4 6 3 12 5 3 4;
}

.box, .note {
  position: absolute;
  display: grid;
  place-content: center;
  text-align: center;
  line-height: 16px;
  white-space: nowrap;
}

.box {
  border: 1px solid #323232;
  background: #fff;
}

.note {
  background: #fdff9c;
}

.note::after {
  content: "";
  position: absolute;
  right: 0;
  top: 0;
  border: 8px solid #cccc7e;
  border-top-color: #fff;
  border-right-color: #fff;
}

.note.flat::after {
  display: none;
}

.note.pink, .box.red {
  background: #fdcaca;
}

.note.pink::after {
  border-color: #fff #fff #cfa0a4 #cfa0a4;
}

.strong {
  font-weight: bold;
}

.n-simple { left: 47px; top: 97px; width: 199px; height: 36px; }
.n-redis { left: 308px; top: 97px; width: 199px; height: 36px; }
.n-match { left: 472px; top: -5px; width: 224px; height: 32px; }
.n-boot { left: 681px; top: 84px; width: 158px; height: 28px; }
.n-cond { left: 557px; top: 174px; width: 176px; height: 36px; }
.n-manager { left: 172px; top: 405px; width: 222px; height: 35px; }
.n-proxy { left: 1052px; top: 224px; width: 118px; height: 23px; }
.n-proxy2 { left: 1060px; top: 288px; width: 120px; height: 21px; }
.n-blank { left: 1091px; top: 82px; width: 80px; height: 25px; }
.n-bean { left: 855px; top: 84px; width: 191px; height: 67px; padding-bottom: 3px; }
.n-question { left: 684px; top: 219px; width: 322px; height: 184px; padding-left: 10px; place-content: center start; text-align: left; }
.n-user { left: 488px; top: 403px; width: 183px; height: 38px; }
.n-params { left: 695px; top: 411px; width: 329px; height: 91px; padding-bottom: 2px; }
.n-edge { left: 1132px; top: 402px; width: 20px; height: 28px; }

.tag {
  position: absolute;
  background: #fdfdfe;
  line-height: 16px;
  white-space: nowrap;
}

.tag.bare {
  background: none;
  color: #888;
}

.t-no { left: 98px; top: 48px; }
.t-yes { left: 321px; top: 54px; }
.t-parent { left: 735px; top: 8px; }
.t-cond { left: 413px; top: 146px; }
.t-dots { left: 268px; top: 104px; }

.v-bar {
  width: 9px;
  padding: 256px 1px 0;
  border-left: 1px solid #ddd;
  background: #fff;
}

.v-bar .thumb {
  height: 64px;
}

.dock {
  position: absolute;
  right: 9px;
  top: 0;
  width: 37px;
  padding: 3px 0 7px;
  display: flex;
  flex-direction: column;
  border: 1px solid #bbb;
  border-top: 10px solid #3c3c3e;
  border-radius: 0 0 0 3px;
  background: #f6f6f7;
}

.dock button {
  height: 31px;
  display: grid;
  place-items: center;
}

.fx {
  font: italic bold 12px "Liberation Serif", serif;
}

.h-bar {
  position: relative;
  flex: none;
  height: 9px;
  padding-top: 1px;
  background: #fff;
}

.h-bar .thumb {
  width: 27%;
  height: 7px;
  margin-left: 269px;
}

.cursor {
  position: absolute;
  left: 326px;
  top: -3px;
}

.status {
  flex: none;
  height: 35px;
  display: flex;
  align-items: center;
  border-top: 1px solid #a2a4a8;
  background: #f0f0f2;
}

.avatar {
  margin-left: 11px;
}

.invite, .link {
  display: flex;
  align-items: center;
  gap: 5px;
  padding-bottom: 3px;
  color: #333;
}

.invite {
  margin: 0 auto 0 13px;
}

.link {
  height: 34px;
  padding: 0 12px 3px;
  border-left: 1px solid #a2a4a8;
}

.feedback {
  border: 0;
  background: #4b4b4b;
  color: #fff;
  font-weight: bold;
}

/* Sliver of the IDE window behind the browser */
.ide-status {
  flex: none;
  height: 8px;
  display: flex;
  gap: 13px;
  padding: 0 12px 0 565px;
  overflow: hidden;
  color: #9a9c9e;
  font-size: 12px;
  line-height: 16px;
}

.ide-status span {
  margin-top: -10px;
}

.ide-status .ide-task {
  margin-right: auto;
}

/* Windows taskbar */
.taskbar {
  flex: none;
  height: 40px;
  display: flex;
  background: #0d0e10;
  color: #fff;
  font-family: "Open Sans", "Noto Sans CJK SC", sans-serif;
}

.start, .app {
  width: 49px;
  display: grid;
  place-items: center;
}

.start {
  width: 48px;
}

.start + .app {
  margin-left: 2px;
}

.run {
  background: linear-gradient(#8bd3d6, #8bd3d6) center bottom / 40px 2px no-repeat;
}

.current {
  background-color: #353638;
  background-size: 49px 2px;
}

.ij {
  fill: #fff;
  font: bold 9px "Liberation Mono", monospace;
}

.tray {
  display: flex;
  align-items: center;
  gap: 10px;
  margin-left: auto;
  margin-right: 4px;
  padding-right: 4px;
  border-right: 1px solid #555;
}

.ime {
  font-size: 13px;
}

.clock {
  width: 68px;
  margin-left: 3px;
  font-size: 12px;
  line-height: 19px;
  text-align: center;
}
```
